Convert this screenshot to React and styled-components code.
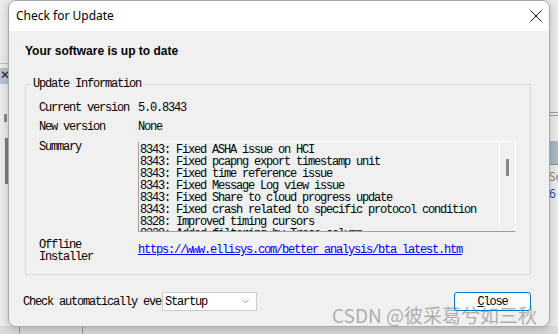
import React from 'react';
import styled, { createGlobalStyle } from 'styled-components';
import { ChevronDown } from 'lucide-react';

const GlobalStyle = createGlobalStyle`
  html, body {
    margin: 0;
    padding: 0;
  }
  body {
    width: 558px;
    height: 334px;
    overflow: hidden;
    background: #e8e8e8;
  }
`;

const mono = `"Liberation Mono", "Courier New", monospace`;

const monoText = `
  font-family: ${mono};
  font-size: 12px;
  letter-spacing: -1.2px;
  line-height: 12px;
`;

const Desktop = styled.div`
  position: relative;
  width: 558px;
  height: 334px;
  overflow: hidden;
  background: #ebebeb;
`;

// bits of the application window that sits behind the dialog
const BgBlock = styled.div`
  position: absolute;
  left: ${p => p.x}px;
  top: ${p => p.y}px;
  width: ${p => p.w}px;
  height: ${p => p.h}px;
  background: ${p => p.bg};
`;

const BgText = styled.div`
  position: absolute;
  left: ${p => p.x}px;
  top: ${p => p.y}px;
  font: 12px "Noto Sans", sans-serif;
  line-height: 14px;
  color: ${p => p.color};
`;

const Window = styled.div`
  position: absolute;
  left: 8px;
  top: 0;
  width: 542px;
  height: 327px;
  box-sizing: border-box;
  border: 1px solid #a9a9a9;
  border-radius: 8px;
  background: #f0f0f0;
  box-shadow: 0 2px 8px rgba(0, 0, 0, 0.22);
  overflow: hidden;
  display: flex;
  flex-direction: column;
`;

const TitleBar = styled.div`
  height: 30px;
  flex: none;
  background: #ffffff;
  display: flex;
  align-items: center;
  padding-left: 7px;
`;

const Title = styled.div`
  font: 12px "Noto Sans", "Open Sans", sans-serif;
  color: #000;
  line-height: 16px;
`;

const TitleClose = styled.div`
  margin-left: auto;
  margin-right: 7px;
  width: 12px;
  height: 12px;
  display: flex;
`;

const Body = styled.div`
  flex: 1;
  display: flex;
  flex-direction: column;
  padding: 12px 18px 0 16px;
`;

const Heading = styled.div`
  font: bold 12px "Liberation Sans", Arial, sans-serif;
  line-height: 16px;
  height: 16px;
  color: #000;
`;

const Group = styled.fieldset`
  margin: 19px 0 0 0;
  padding: 0;
  border: 1px solid #d9d9d9;
  min-width: 0;
`;

const Legend = styled.legend`
  margin-left: 5px;
  padding: 0 2px;
  ${monoText}
  color: #000;
`;

const InfoGrid = styled.div`
  display: grid;
  grid-template-columns: 99px 1fr;
  grid-template-rows: 19px 20px 98px auto;
  padding: 12px 14px 11px 13px;
`;

const Cell = styled.div`
  ${monoText}
  color: #000;
  white-space: pre;
`;

const SummaryBox = styled.div`
  height: 91px;
  box-sizing: border-box;
  display: flex;
  border-top: 1px solid #ffffff;
  border-right: 1px solid #ffffff;
  border-left: 1px solid #a0a0a0;
  border-bottom: 1px solid #a0a0a0;
  background: #f0f0f0;
`;

const SummaryText = styled.div`
  flex: 1;
  overflow: hidden;
  padding: 2px 0 0 1px;
`;

const ScrollTrack = styled.div`
  width: 16px;
  flex: none;
  border-left: 1px solid #ffffff;
  display: flex;
  justify-content: center;
  padding-top: 17px;
  box-sizing: border-box;
`;

const Thumb = styled.div`
  width: 3px;
  height: 17px;
  background: #868686;
`;

const Link = styled.a`
  ${monoText}
  color: #0000ff;
  text-decoration: underline;
  white-space: nowrap;
`;

const Footer = styled.div`
  margin-top: 17px;
  height: 19px;
  display: flex;
  align-items: center;
  margin-left: -2px;
`;

const FooterLabel = styled(Cell)`
  width: 139px;
  overflow: hidden;
  flex: none;
`;

const Select = styled.div`
  width: 95px;
  height: 19px;
  box-sizing: border-box;
  border: 1px solid #cccccc;
  background: #ffffff;
  display: flex;
  align-items: center;
  justify-content: space-between;
  padding: 0 5px 0 2px;
  ${monoText}
  color: #000;
`;

const Button = styled.div`
  margin-left: auto;
  width: 77px;
  height: 19px;
  box-sizing: border-box;
  border: 1px solid #0078d4;
  border-radius: 3px;
  background: #fdfdfd;
  display: flex;
  align-items: center;
  justify-content: center;
  ${monoText}
  color: #000;
  u {
    text-decoration: underline;
  }
`;

const Watermark = styled.div`
  position: absolute;
  left: 332px;
  top: 303px;
  font: 19px "Noto Sans CJK SC", sans-serif;
  line-height: 24px;
  color: rgba(115, 115, 115, 0.55);
  white-space: nowrap;
  pointer-events: none;
`;

const changes = [
  '8343: Fixed ASHA issue on HCI',
  '8343: Fixed pcapng export timestamp unit',
  '8343: Fixed time reference issue',
  '8343: Fixed Message Log view issue',
  '8343: Fixed Share to cloud progress update',
  '8343: Fixed crash related to specific protocol condition',
  '8328: Improved timing cursors',
  '8328: Added filtering by Trace column',
];

export default function App() {
  return (
    <Desktop>
      <GlobalStyle />
      <BgBlock x={0} y={63} w={8} h={1} bg="#c4c4c4" />
      <BgBlock x={0} y={68} w={8} h={16} bg="#b9c3d1" />
      <BgText x={0} y={68} color="#222">✕</BgText>
      <BgBlock x={4} y={114} w={3} h={8} bg="#8a8a8a" />
      <BgBlock x={5} y={138} w={3} h={46} bg="#7d7d7d" />
      <BgBlock x={0} y={326} w={558} h={8} bg="#dadada" />
      <BgBlock x={19} y={326} w={1} h={8} bg="#9a9a9a" />
      <BgBlock x={82} y={326} w={1} h={8} bg="#9a9a9a" />
      <BgBlock x={550} y={112} w={8} h={1} bg="#9c9c9c" />
      <BgBlock x={550} y={115} w={8} h={1} bg="#9c9c9c" />
      <BgBlock x={550} y={141} w={8} h={23} bg="#a9b7cb" />
      <BgBlock x={550} y={164} w={8} h={1} bg="#8f8f8f" />
      <BgText x={549} y={170} color="#8a8a8a">Se</BgText>
      <BgText x={549} y={187} color="#1f4fb8">6</BgText>

      <Window>
        <TitleBar>
          <Title>Check for Update</Title>
          <TitleClose>
            <svg width="12" height="12" viewBox="0 0 12 12">
              <path d="M0.5 0.5 L11.5 11.5 M11.5 0.5 L0.5 11.5" stroke="#000" strokeWidth="1" fill="none" />
            </svg>
          </TitleClose>
        </TitleBar>
        <Body>
          <Heading>Your software is up to date</Heading>
          <Group>
            <Legend>Update Information</Legend>
            <InfoGrid>
              <Cell>Current version</Cell>
              <Cell>5.0.8343</Cell>
              <Cell>New version</Cell>
              <Cell>None</Cell>
              <Cell>Summary</Cell>
              <SummaryBox>
                <SummaryText>
                  {changes.map((c, i) => (
                    <Cell key={i}>{c}</Cell>
                  ))}
                </SummaryText>
                <ScrollTrack>
                  <Thumb />
                </ScrollTrack>
              </SummaryBox>
              <Cell>{'Offline\nInstaller'}</Cell>
              <div>
                <Link href="#">https://www.ellisys.com/better_analysis/bta_latest.htm</Link>
              </div>
            </InfoGrid>
          </Group>
          <Footer>
            <FooterLabel>Check automatically every:</FooterLabel>
            <Select>
              <span>Startup</span>
              <ChevronDown size={11} strokeWidth={1.3} color="#555" />
            </Select>
            <Button>
              <span><u>C</u>lose</span>
            </Button>
          </Footer>
        </Body>
      </Window>
      <Watermark>CSDN @彼采葛兮如三秋</Watermark>
    </Desktop>
  );
}
